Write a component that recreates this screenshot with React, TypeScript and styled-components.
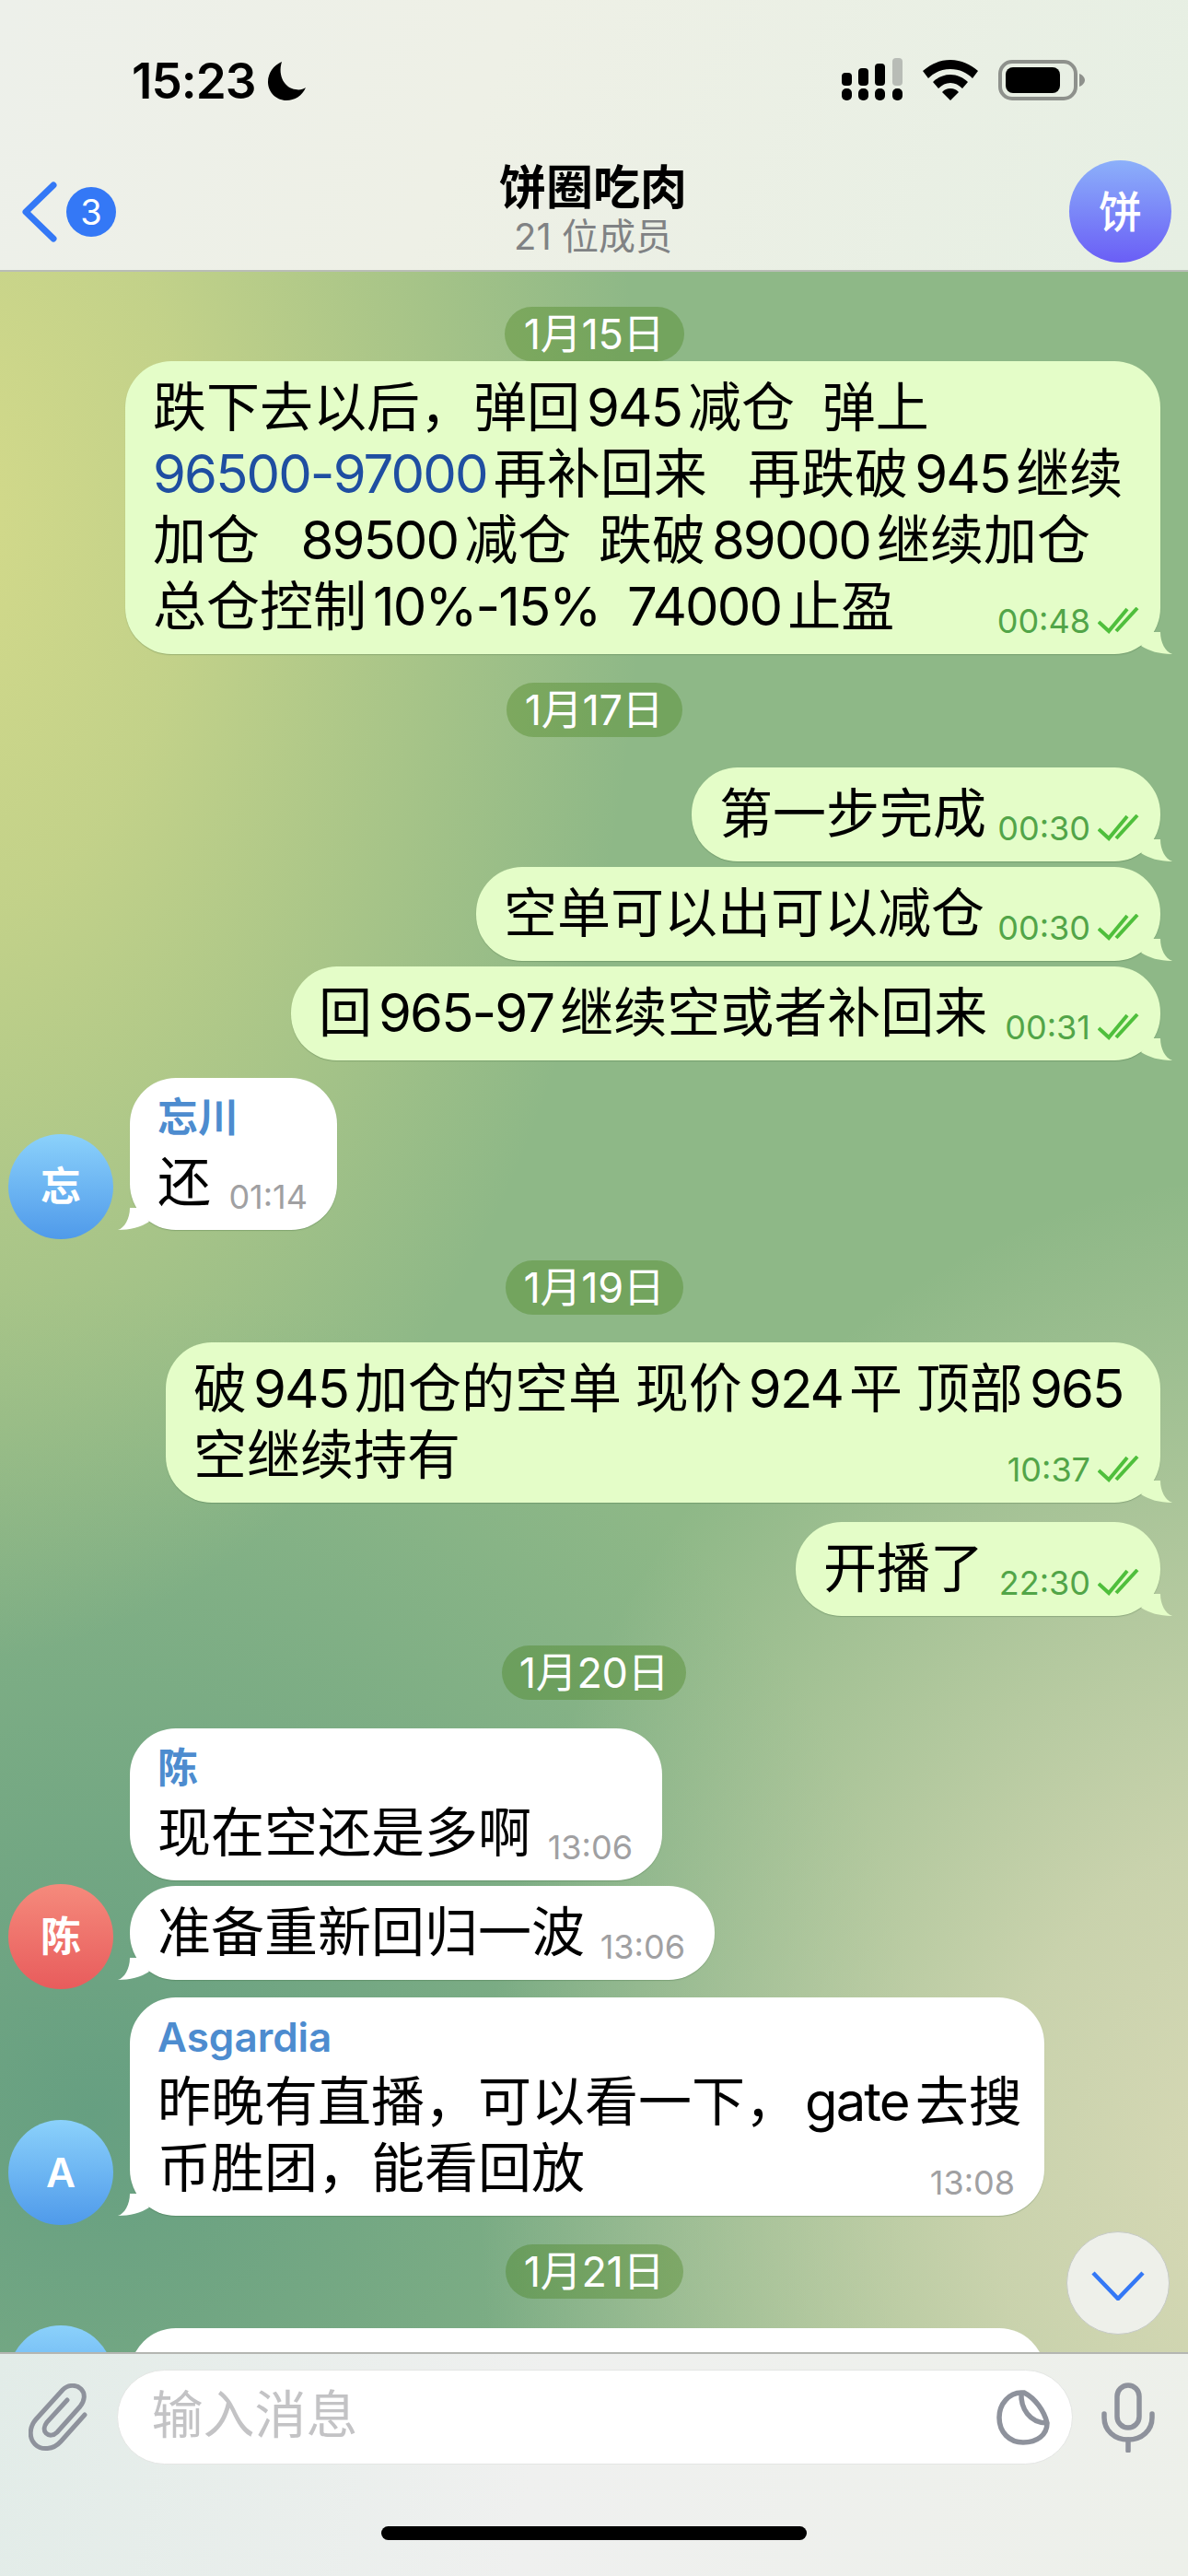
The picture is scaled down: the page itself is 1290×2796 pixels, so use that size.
import React from 'react';
import styled, { createGlobalStyle } from 'styled-components';

const GlobalStyle = createGlobalStyle`
  html, body {
    margin: 0;
    padding: 0;
    width: 1290px;
    height: 2796px;
    overflow: hidden;
    font-family: Inter, "Noto Sans CJK SC", sans-serif;
  }
`;

const BLUE = '#3478f6';
const NBSP = '\u00a0';
const COMMA = '\uff0c';

// iOS puts a small gap where latin text meets CJK text, so wrap each latin run
const rich = (text: string) =>
  text.split(/([0-9A-Za-z%-]+)/).map((part, i, all) => {
    if (i % 2 === 0) return part;
    const before = all[i - 1];
    const after = all[i + 1];
    return (
      <Num
        key={i}
        $gapLeft={before !== '' && !before.endsWith(NBSP)}
        $gapRight={after !== '' && !after.startsWith(NBSP)}
      >
        {part}
      </Num>
    );
  });

const Tail = ({ out, color }: { out?: boolean; color: string }) => (
  <TailSvg $out={out} viewBox="0 0 45 24">
    <path d="M30 0C30 12 36 22 43 24C30 24 18 21 9 15L20 0Z" fill={color} />
  </TailSvg>
);

const Checks = () => (
  <svg width="46" height="30" viewBox="0 0 46 30" fill="none" stroke="#4fbf3c" strokeWidth="4">
    <path d="M1 16L12 26L32 2" />
    <path d="M20 26L43 1" />
  </svg>
);

const Outgoing = ({
  width,
  top,
  time,
  lines,
}: {
  width: number;
  top: number;
  time: string;
  lines: React.ReactNode[];
}) => (
  <OutRow $top={top}>
    <Bubble $width={width} $out>
      {lines.slice(0, -1).map((line, i) => (
        <Line key={i}>{line}</Line>
      ))}
      <LastLine>
        <Line>{lines[lines.length - 1]}</Line>
        <Meta $out>
          {time}
          <Checks />
        </Meta>
      </LastLine>
      <Tail out color="#e4fdc8" />
    </Bubble>
  </OutRow>
);

const Incoming = ({
  width,
  name,
  time,
  lines,
  tail,
}: {
  width: number;
  name?: string;
  time: string;
  lines: React.ReactNode[];
  tail?: boolean;
}) => (
  <Bubble $width={width}>
    {name && <SenderName>{name}</SenderName>}
    {lines.slice(0, -1).map((line, i) => (
      <Line key={i}>{line}</Line>
    ))}
    <LastLine>
      <Line>{lines[lines.length - 1]}</Line>
      <Meta>{time}</Meta>
    </LastLine>
    {tail && <Tail color="#ffffff" />}
  </Bubble>
);

export default function App() {
  return (
    <Page>
      <GlobalStyle />
      <Header>
        <StatusBar>
          <Clock>
            15:23
            <svg width="44" height="42" viewBox="0 0 44 42">
              <path d="M17 0C8 4 2 12 2 22C2 33 11 42 22 42C31 42 39 37 43 28C40 30 36 31 32 30C21 29 12 16 17 0Z" fill="#000" />
            </svg>
          </Clock>
          <StatusIcons>
            <svg width="66" height="46" viewBox="0 0 66 46">
              <rect x="0" y="16" width="11" height="14" rx="4" />
              <rect x="18" y="11" width="11" height="19" rx="4" />
              <rect x="36" y="6" width="11" height="24" rx="4" />
              <rect x="55" y="0" width="11" height="30" rx="4" fill="#b8bcb6" />
              <rect x="0" y="33" width="11" height="13" rx="5" />
              <rect x="18" y="33" width="11" height="13" rx="5" />
              <rect x="36" y="33" width="11" height="13" rx="5" />
              <rect x="55" y="33" width="11" height="13" rx="5" />
            </svg>
            <svg width="60" height="44" viewBox="0 0 60 44">
              <path d="M30 0C18 0 8 5 0 12L6 20C12 14 20 10 30 10C40 10 48 14 54 20L60 12C52 5 42 0 30 0Z" />
              <path d="M30 16C23 16 16 19 11 24L17 31C21 27 25 25 30 25C35 25 39 27 43 31L49 24C44 19 37 16 30 16Z" />
              <path d="M30 31C26 31 24 32 21 35L30 44L39 35C36 32 34 31 30 31Z" />
            </svg>
            <svg width="94" height="44" viewBox="0 0 94 44">
              <rect x="2" y="2" width="82" height="40" rx="13" fill="none" stroke="#8e918c" strokeWidth="4" />
              <rect x="8" y="8" width="59" height="28" rx="8" />
              <path d="M88 15C91 16 94 19 94 22C94 25 91 28 88 29Z" fill="#8e918c" />
            </svg>
          </StatusIcons>
        </StatusBar>
        <NavBar>
          <BackGroup>
            <svg width="38" height="66" viewBox="0 0 38 66" fill="none" stroke={BLUE} strokeWidth="7" strokeLinecap="round" strokeLinejoin="round">
              <path d="M34 4L4 33L34 62" />
            </svg>
            <Badge>3</Badge>
          </BackGroup>
          <TitleBlock>
            <Title>饼圈吃肉</Title>
            <Subtitle>21 位成员</Subtitle>
          </TitleBlock>
          <GroupAvatar>饼</GroupAvatar>
        </NavBar>
      </Header>

      <Chat>
        <DateChip $top={38} $width={195}>1月15日</DateChip>
        <Outgoing
          width={1124}
          top={0}
          time="00:48"
          lines={[
            rich(`跌下去以后${COMMA}弹回945减仓${NBSP}${NBSP}弹上`),
            <>
              <Link><Num $gapRight>96500-97000</Num></Link>
              {rich(`再补回来${NBSP}${NBSP}${NBSP}再跌破945继续`)}
            </>,
            rich(`加仓${NBSP}${NBSP}${NBSP}89500减仓${NBSP}${NBSP}跌破89000继续加仓`),
            rich(`总仓控制10%-15%${NBSP}${NBSP}74000止盈`),
          ]}
        />
        <DateChip $top={31} $width={191}>1月17日</DateChip>
        <Outgoing width={509} top={33} time="00:30" lines={['第一步完成']} />
        <Outgoing width={743} top={6} time="00:30" lines={['空单可以出可以减仓']} />
        <Outgoing width={944} top={6} time="00:31" lines={[rich('回965-97继续空或者补回来')]} />

        <InRow $top={19}>
          <Avatar $tone="blue">忘</Avatar>
          <InStack>
            <Incoming width={225} name="忘川" time="01:14" lines={['还']} tail />
          </InStack>
        </InRow>

        <DateChip $top={33} $width={193}>1月19日</DateChip>
        <Outgoing
          width={1080}
          top={30}
          time="10:37"
          lines={[rich(`破945加仓的空单${NBSP}现价924平${NBSP}顶部965`), '空继续持有']}
        />
        <Outgoing width={396} top={21} time="22:30" lines={['开播了']} />

        <DateChip $top={32} $width={200}>1月20日</DateChip>
        <InRow $top={31}>
          <Avatar $tone="red">陈</Avatar>
          <InStack>
            <Incoming width={578} name="陈" time="13:06" lines={['现在空还是多啊']} />
            <Incoming width={635} time="13:06" lines={['准备重新回归一波']} tail />
          </InStack>
        </InRow>

        <InRow $top={19}>
          <Avatar $tone="blue">A</Avatar>
          <InStack>
            <Incoming
              width={993}
              name="Asgardia"
              time="13:08"
              lines={[rich(`昨晚有直播${COMMA}可以看一下${COMMA}gate去搜`), `币胜团${COMMA}能看回放`]}
              tail
            />
          </InStack>
        </InRow>

        <DateChip $top={31} $width={193}>1月21日</DateChip>
        <ClippedRow>
          <ClippedAvatar />
          <ClippedBubble />
        </ClippedRow>

        <ScrollDown>
          <svg width="58" height="32" viewBox="0 0 58 32" fill="none" stroke={BLUE} strokeWidth="4.5">
            <path d="M2 2L29 30L56 2" />
          </svg>
        </ScrollDown>
      </Chat>

      <Composer>
        <InputRow>
          <svg width="64" height="74" viewBox="0 0 64 74" fill="none" stroke="#8e929c" strokeWidth="5" strokeLinecap="round">
            <path d="M61 34L35 63C27 72 14 73 7 66C0 59 1 47 8 39L37 7C43 1 52 1 57 6C62 11 61 19 56 25L31 53C27 57 22 57 19 54C16 51 17 46 20 42L42 18" />
          </svg>
          <InputField>
            <Placeholder>输入消息</Placeholder>
            <svg width="58" height="60" viewBox="0 0 58 60" fill="none" stroke="#8e929c" strokeWidth="5.5">
              <path d="M55 36C55 49 44 57 29 57C14 57 3 46 3 30C3 15 14 3 27 3C28 3 29 3 30 3C42 9 52 23 55 36Z" />
              <path d="M27 3C26 20 36 36 55 36" />
            </svg>
          </InputField>
          <svg width="58" height="76" viewBox="0 0 58 76" fill="none" stroke="#8e929c" strokeWidth="5.5" strokeLinecap="round">
            <rect x="17" y="3" width="24" height="46" rx="12" />
            <path d="M3 34V38C3 52 14 62 29 62C44 62 55 52 55 38V34" />
            <path d="M29 62V74" />
          </svg>
        </InputRow>
        <HomeBar />
      </Composer>
    </Page>
  );
}

const Page = styled.div`
  width: 1290px;
  height: 2796px;
  display: flex;
  flex-direction: column;
  overflow: hidden;
`;

const Header = styled.header`
  height: 295px;
  flex: none;
  box-sizing: border-box;
  border-bottom: 2px solid #b9bdb6;
  background: linear-gradient(115deg, #edf0ea 0%, #eef0e6 40%, #e6efe3 100%);
  display: flex;
  flex-direction: column;
`;

const StatusBar = styled.div`
  height: 174px;
  flex: none;
  box-sizing: border-box;
  padding: 63px 112px 0 143px;
  display: flex;
  justify-content: space-between;
  align-items: flex-start;
`;

const Clock = styled.div`
  display: flex;
  align-items: center;
  gap: 12px;
  font-size: 53px;
  font-weight: 600;
  line-height: 50px;
  letter-spacing: -1px;
  color: #000;
`;

const StatusIcons = styled.div`
  display: flex;
  align-items: flex-end;
  gap: 22px;
`;

const NavBar = styled.div`
  display: grid;
  grid-template-columns: 1fr auto 1fr;
  align-items: flex-start;
  padding: 0 18px 0 16px;
`;

const BackGroup = styled.div`
  display: flex;
  align-items: center;
  gap: 10px;
  margin: 23px 0 0 8px;
`;

const Badge = styled.div`
  width: 54px;
  height: 54px;
  border-radius: 50%;
  background: ${BLUE};
  color: #fff;
  font-size: 38px;
  line-height: 54px;
  text-align: center;
`;

const TitleBlock = styled.div`
  display: flex;
  flex-direction: column;
  align-items: center;
`;

const Title = styled.div`
  font-size: 51px;
  font-weight: 700;
  line-height: 60px;
  color: #000;
`;

const Subtitle = styled.div`
  font-size: 40px;
  line-height: 46px;
  color: #808284;
`;

const GroupAvatar = styled.div`
  justify-self: end;
  width: 111px;
  height: 111px;
  border-radius: 50%;
  background: linear-gradient(180deg, #8cb0fa, #6a5ef6);
  color: #fff;
  font-size: 47px;
  font-weight: 500;
  line-height: 111px;
  text-align: center;
`;

const Chat = styled.main`
  flex: 1;
  min-height: 0;
  position: relative;
  overflow: hidden;
  display: flex;
  flex-direction: column;
  background:
    radial-gradient(ellipse 760px 1250px at -60px 260px, #d4da8a 0%, rgba(212, 218, 138, 0.75) 35%, rgba(212, 218, 138, 0) 100%),
    radial-gradient(ellipse 860px 1100px at 1380px 2080px, #d8d9b6 0%, rgba(216, 217, 182, 0.8) 35%, rgba(216, 217, 182, 0) 100%),
    radial-gradient(ellipse 900px 900px at 100px 2000px, #669f81 0%, rgba(102, 159, 129, 0) 100%),
    #8eb887;
`;

const DateChip = styled.div<{ $top: number; $width: number }>`
  align-self: center;
  flex: none;
  margin-top: ${(p) => p.$top}px;
  width: ${(p) => p.$width}px;
  height: 59px;
  border-radius: 30px;
  background: rgba(60, 120, 10, 0.32);
  color: #fff;
  font-size: 45px;
  line-height: 59px;
  letter-spacing: -0.3px;
  text-align: center;
`;

const OutRow = styled.div<{ $top: number }>`
  flex: none;
  display: flex;
  justify-content: flex-end;
  margin-top: ${(p) => p.$top}px;
  padding-right: 30px;
`;

const InRow = styled.div<{ $top: number }>`
  flex: none;
  display: flex;
  align-items: flex-end;
  gap: 18px;
  margin-top: ${(p) => p.$top}px;
  padding-left: 9px;
`;

const InStack = styled.div`
  display: flex;
  flex-direction: column;
  gap: 6px;
`;

const Avatar = styled.div<{ $tone: 'blue' | 'red' }>`
  width: 114px;
  height: 114px;
  flex: none;
  margin-bottom: -10px;
  border-radius: 50%;
  background: ${(p) =>
    p.$tone === 'blue'
      ? 'linear-gradient(180deg, #8bd1fb, #4f9aea)'
      : 'linear-gradient(180deg, #f58a7c, #e85c5c)'};
  color: #fff;
  font-size: 44px;
  font-weight: 600;
  line-height: 114px;
  text-align: center;
`;

const Bubble = styled.div<{ $width: number; $out?: boolean }>`
  position: relative;
  box-sizing: border-box;
  width: ${(p) => p.$width}px;
  padding: 14px ${(p) => (p.$out ? 22 : 32)}px 16px 30px;
  border-radius: 50px;
  background: ${(p) => (p.$out ? '#e4fdc8' : '#ffffff')};
  box-shadow: 0 1px 1px rgba(40, 80, 40, 0.25);
`;

const SenderName = styled.div`
  font-size: 44px;
  font-weight: 600;
  line-height: 58px;
  margin-bottom: 5px;
  color: #4d8ccf;
`;

const Line = styled.div`
  font-size: 58px;
  line-height: 72px;
  color: #000;
  white-space: nowrap;
  word-spacing: -1.5px;
`;

const Num = styled.span<{ $gapLeft?: boolean; $gapRight?: boolean }>`
  letter-spacing: -1.9px;
  margin-left: ${(p) => (p.$gapLeft ? 7 : 0)}px;
  margin-right: ${(p) => (p.$gapRight ? 7 : 0)}px;
`;

const LastLine = styled.div`
  display: flex;
  justify-content: space-between;
  align-items: flex-end;
`;

const Link = styled.span`
  color: #1f4ea1;
`;

const Meta = styled.div<{ $out?: boolean }>`
  display: flex;
  align-items: center;
  gap: 8px;
  font-size: 36px;
  line-height: 44px;
  margin-bottom: -2px;
  color: ${(p) => (p.$out ? '#52a548' : '#a0a0a2')};
`;

const TailSvg = styled.svg<{ $out?: boolean }>`
  position: absolute;
  bottom: 0;
  width: 45px;
  height: 24px;
  ${(p) => (p.$out ? 'right: -15px;' : 'left: -15px; transform: scaleX(-1);')}
`;

const ClippedRow = styled.div`
  flex: none;
  display: flex;
  gap: 18px;
  margin-top: 32px;
  padding-left: 9px;
`;

const ClippedAvatar = styled.div`
  width: 114px;
  height: 114px;
  margin-top: -3px;
  border-radius: 50%;
  background: linear-gradient(180deg, #8bd1fb, #4f9aea);
`;

const ClippedBubble = styled.div`
  width: 994px;
  height: 200px;
  border-radius: 50px;
  background: #fff;
`;

const ScrollDown = styled.div`
  position: absolute;
  right: 20px;
  bottom: 19px;
  box-sizing: border-box;
  width: 112px;
  height: 112px;
  border-radius: 50%;
  border: 1px solid #c6cac6;
  background: #eef0ea;
  display: flex;
  align-items: center;
  justify-content: center;
  padding-top: 6px;
`;

const Composer = styled.footer`
  height: 243px;
  flex: none;
  box-sizing: border-box;
  border-top: 2px solid #b4b6b2;
  background: linear-gradient(100deg, #e2ece8 0%, #eff0ef 45%, #edf0ea 100%);
  display: flex;
  flex-direction: column;
  align-items: center;
`;

const InputRow = styled.div`
  width: 100%;
  box-sizing: border-box;
  display: flex;
  align-items: center;
  justify-content: space-between;
  padding: 17px 36px 0 31px;
`;

const InputField = styled.div`
  width: 1038px;
  height: 103px;
  box-sizing: border-box;
  border: 1px solid #e4e6e4;
  border-radius: 52px;
  background: #fff;
  display: flex;
  align-items: center;
  justify-content: space-between;
  padding: 0 24px 0 37px;
`;

const Placeholder = styled.div`
  font-size: 56px;
  line-height: 72px;
  margin-top: -5px;
  color: #c3c3c5;
`;

const HomeBar = styled.div`
  width: 462px;
  height: 15px;
  margin-top: 67px;
  border-radius: 8px;
  background: #000;
`;
